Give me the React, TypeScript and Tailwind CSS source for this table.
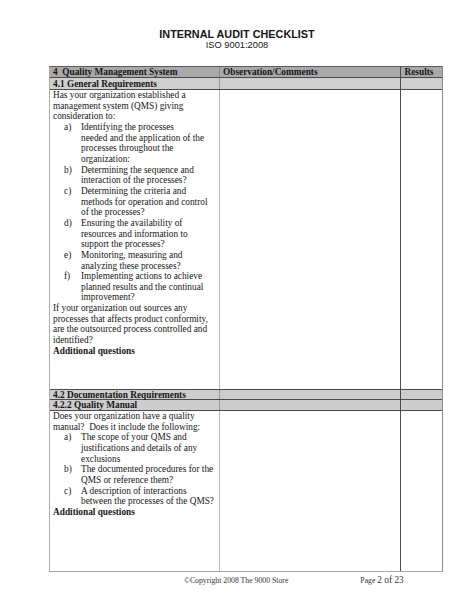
// Page 2 of the ISO 9001:2008 internal audit checklist, rebuilt as a
// plain document page: centred title, a three-column checklist table,
// and the copyright footer.

import type { ReactNode } from "react";

type Item = { mark: string; lines: string[] };

function Lines({ lines }: { lines: string[] }) {
  return (
    <>
      {lines.map((l, i) => (
        <span key={i} className="block">
          {l}
        </span>
      ))}
    </>
  );
}

function List({ items }: { items: Item[] }) {
  return (
    <div className="ml-[11px]">
      {items.map((it) => (
        <div key={it.mark} className="flex">
          <span className="w-[17px] shrink-0">{it.mark}</span>
          <div>
            <Lines lines={it.lines} />
          </div>
        </div>
      ))}
    </div>
  );
}

// Grey title row that spans the whole table
function BandRow({
  title,
  height,
  shade,
  children,
}: {
  title: ReactNode;
  height: string;
  shade: string;
  children?: ReactNode;
}) {
  return (
    <div className={`flex border-b border-[#4a4a4a] ${height} ${shade}`}>
      <div className="w-[170px] shrink-0 border-r border-[#9a9a9a] pl-[3px] font-bold leading-[10px] whitespace-nowrap flex items-center">
        {title}
      </div>
      <div className="w-[181px] shrink-0 border-r border-[#4a4a4a] pl-[3px] font-bold leading-[10px] flex items-center">
        {children}
      </div>
      <div className="flex-1" />
    </div>
  );
}

function BodyRow({ height, children, last }: { height: string; children: ReactNode; last?: boolean }) {
  return (
    <div className={`flex ${height} ${last ? "" : "border-b border-[#4a4a4a]"}`}>
      <div className="w-[170px] shrink-0 border-r border-[#b8b8b8] pl-[3px] leading-[10.65px] whitespace-pre">
        {children}
      </div>
      <div className="w-[181px] shrink-0 border-r border-[#4a4a4a]" />
      <div className="flex-1" />
    </div>
  );
}

const generalItems: Item[] = [
  {
    mark: "a)",
    lines: [
      "Identifying the processes",
      "needed and the application of the",
      "processes throughout the",
      "organization:",
    ],
  },
  { mark: "b)", lines: ["Determining the sequence and", "interaction of the processes?"] },
  {
    mark: "c)",
    lines: ["Determining the criteria and", "methods for operation and control", "of the processes?"],
  },
  {
    mark: "d)",
    lines: ["Ensuring the availability of", "resources and information to", "support the processes?"],
  },
  { mark: "e)", lines: ["Monitoring, measuring and", "analyzing these processes?"] },
  {
    mark: "f)",
    lines: ["Implementing actions to achieve", "planned results and the continual", "improvement?"],
  },
];

const manualItems: Item[] = [
  {
    mark: "a)",
    lines: ["The scope of your QMS and", "justifications and details of any", "exclusions"],
  },
  { mark: "b)", lines: ["The documented procedures for the", "QMS or reference them?"] },
  { mark: "c)", lines: ["A description of interactions", "between the processes of the QMS?"] },
];

export default function App() {
  return (
    <div className="w-[474px] h-[613px] bg-white text-[#161616] overflow-hidden">
      <div className="pt-[28px] text-center font-['Liberation_Sans',Arial,sans-serif]">
        <div className="text-[10.85px] leading-[12px] font-bold">INTERNAL AUDIT CHECKLIST</div>
        <div className="text-[9.3px] leading-[11px]">ISO 9001:2008</div>
      </div>

      <div className="ml-[49px] mt-[15px] w-[394px] border-t border-l border-r border-b border-t-[#5a5a5a] border-l-[#adadad] border-r-[#8a8a8a] border-b-[#a8a8a8] font-['Liberation_Serif','Times_New_Roman',serif] text-[9.3px]">
        {/* header */}
        <div className="flex h-[11px] border-b border-[#4a4a4a] bg-[#a9a9a9] font-bold leading-[10px]">
          <div className="w-[170px] shrink-0 border-r border-[#8a8a8a] pl-[3px] whitespace-pre flex items-center">
            {"4  Quality Management System"}
          </div>
          <div className="w-[181px] shrink-0 border-r border-[#4a4a4a] pl-[3px] flex items-center">
            Observation/Comments
          </div>
          <div className="flex-1 pl-[3.5px] flex items-center">Results</div>
        </div>

        <BandRow title="4.1 General Requirements" height="h-[12px]" shade="bg-[#cfcfcf]" />

        <BodyRow height="h-[300px]">
          <Lines
            lines={["Has your organization established a", "management system (QMS) giving", "consideration to:"]}
          />
          <List items={generalItems} />
          <Lines
            lines={[
              "If your organization out sources any",
              "processes that affects product conformity,",
              "are the outsourced process controlled and",
              "identified?",
            ]}
          />
          <span className="block font-bold">Additional questions</span>
        </BodyRow>

        <BandRow title="4.2 Documentation Requirements" height="h-[10px]" shade="bg-[#cdcdcd]" />
        <BandRow title="4.2.2 Quality Manual" height="h-[11px]" shade="bg-[#cdcdcd]" />

        <BodyRow height="h-[160px]" last>
          <Lines lines={["Does your organization have a quality", "manual?  Does it include the following:"]} />
          <List items={manualItems} />
          <span className="block font-bold">Additional questions</span>
        </BodyRow>
      </div>

      {/* footer */}
      <div className="mt-[3px] flex items-baseline leading-[10px] font-['Liberation_Serif','Times_New_Roman',serif] text-[#333]">
        <span className="ml-[184px] text-[7.75px]">©Copyright 2008 The 9000 Store</span>
        <span className="ml-[72px] text-[7.75px]">
          Page <span className="text-[9.3px]">2 of 23</span>
        </span>
      </div>
    </div>
  );
}
